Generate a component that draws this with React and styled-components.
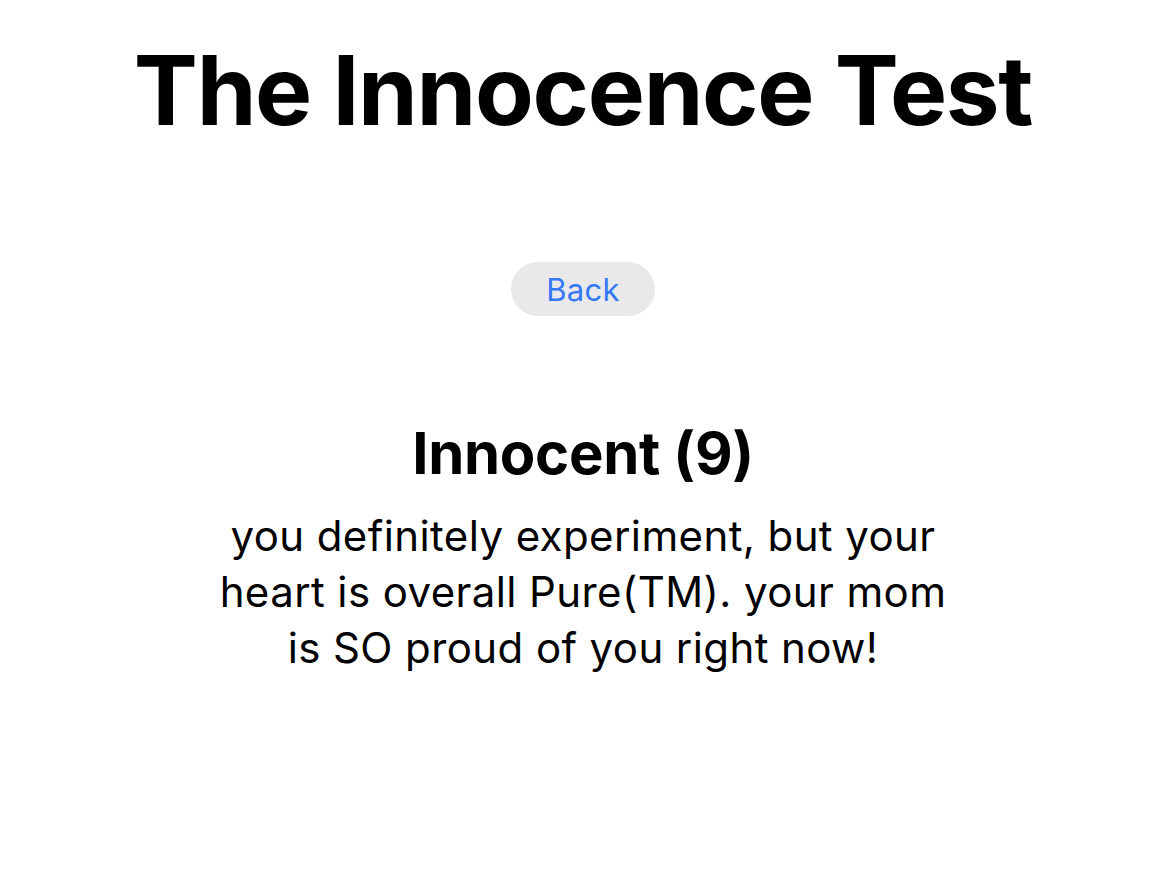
import styled, { createGlobalStyle } from 'styled-components'

const GlobalStyle = createGlobalStyle`
  html, body {
    margin: 0;
    padding: 0;
    background: #ffffff;
  }
  body {
    font-family: Inter, "Noto Sans", sans-serif;
    color: #000000;
  }
`

const Page = styled.main`
  display: flex;
  flex-direction: column;
  align-items: center;
  width: 1166px;
  min-height: 886px;
`

const Title = styled.h1`
  margin: 32px 0 0;
  font-size: 96px;
  font-weight: 700;
  line-height: 116px;
  letter-spacing: -1.3px;
  text-align: center;
`

const BackButton = styled.button`
  margin-top: 114px;
  width: 144px;
  height: 54px;
  border: none;
  border-radius: 27px;
  background: #e9e9eb;
  color: #3478f6;
  font-family: Inter, "Noto Sans", sans-serif;
  font-size: 31px;
  font-weight: 400;
  letter-spacing: 0.3px;
  cursor: pointer;
`

const Result = styled.section`
  display: flex;
  flex-direction: column;
  align-items: center;
  margin-top: 102px;
`

const Verdict = styled.h2`
  margin: 0;
  font-size: 58px;
  font-weight: 700;
  line-height: 70px;
  letter-spacing: -0.3px;
`

const Description = styled.p`
  margin: 20px 0 0;
  width: 760px;
  font-size: 42px;
  line-height: 56px;
  letter-spacing: 0.4px;
  text-align: center;
`

export default function App() {
  return (
    <Page>
      <GlobalStyle />
      <Title>The Innocence Test</Title>
      <BackButton>Back</BackButton>
      <Result>
        <Verdict>Innocent (9)</Verdict>
        <Description>
          you definitely experiment, but your heart is overall Pure(TM). your mom is SO proud of you right now!
        </Description>
      </Result>
    </Page>
  )
}
